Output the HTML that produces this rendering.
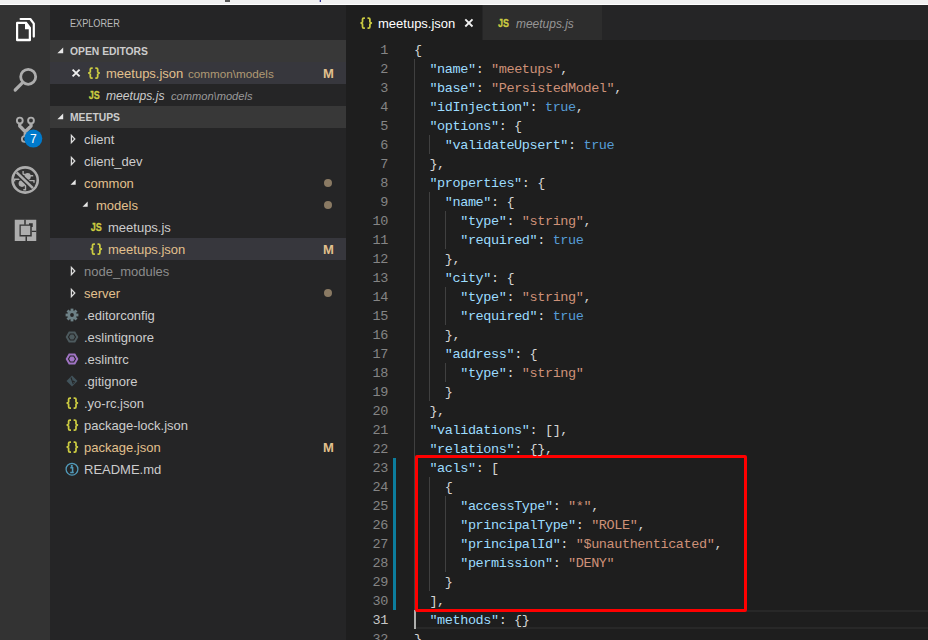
<!DOCTYPE html>
<html><head><meta charset="utf-8">
<style>
*{margin:0;padding:0;box-sizing:border-box}
html,body{width:928px;height:640px;overflow:hidden;background:#1e1e1e}
body{position:relative;font-family:"Liberation Sans",sans-serif}
.abs{position:absolute}
#top{left:0;top:0;width:928px;height:5px;background:#f0f0f0;border-bottom:1px solid #fff}
#act{left:0;top:5px;width:50px;height:635px;background:#333333}
#side{left:50px;top:5px;width:296px;height:635px;background:#252526}
#tabs{left:346px;top:5px;width:582px;height:35px;background:#252526}
#editor{left:346px;top:40px;width:582px;height:600px;background:#1e1e1e}
.row{position:absolute;left:0;width:296px;height:22px;font-size:13px;line-height:22px;color:#cccccc;white-space:nowrap}
.row>span.abs,.row>.badgeM{top:1px}
.hdr>span.abs{top:0}
.hdr{background:#383838;font-weight:bold;font-size:11px;color:#cccccc}
.sel{background:#37373d}
.mod{color:#e2c08d}
.ign{color:#8c8c8c}
.badgeM{position:absolute;left:273px;top:0;font-weight:bold;font-size:13px;color:#e2c08d}
.dot{position:absolute;left:274px;top:7px;width:8px;height:8px;border-radius:50%;background:#8a7a63}
.ln{position:absolute;left:0;top:1px;width:42px;text-align:right;color:#858585}
.ln.act{color:#c6c6c6}
.sx{display:inline-block;transform-origin:0 50%}
.code{position:absolute;top:1px;left:68px;white-space:pre;color:#d4d4d4}
.k{color:#9cdcfe}.s{color:#ce9178}.b{color:#569cd6}
.line{position:absolute;left:0;width:582px;height:19px;line-height:19px;font-family:"Liberation Mono",monospace;font-size:13.5px;letter-spacing:-0.4px}
.guide{position:absolute;width:1px;background:#404040}
</style></head><body>
<div id="top" class="abs"></div>
<div id="act" class="abs"></div>
<div id="side" class="abs">
  <div class="abs" style="left:20px;top:12px;font-size:11px;color:#bbbbbb"><span class="sx" style="transform:scaleX(0.83)">EXPLORER</span></div>
  <div class="row hdr" style="top:35px"><span class="abs sx" style="left:20px;transform:scaleX(0.94)">OPEN EDITORS</span></div>
  <div class="row sel mod" style="top:57px"><span class="abs" style="left:56px">meetups.json</span> <span class="abs" style="left:138px;font-size:11.7px;color:#b09a74">common\models</span><span class="badgeM">M</span></div>
  <div class="row" style="top:79px"><span class="abs sx" style="left:56px;font-style:italic;transform:scaleX(0.93)">meetups.js</span><span class="abs sx" style="left:120.5px;font-size:11.7px;font-style:italic;color:#9a9a9a;transform:scaleX(0.95)">common\models</span></div>
  <div class="row hdr" style="top:101px"><span class="abs sx" style="left:20px;transform:scaleX(0.94)">MEETUPS</span></div>
  <div class="row" style="top:123px"><span class="abs" style="left:34px">client</span></div>
  <div class="row" style="top:145px"><span class="abs" style="left:34px">client_dev</span></div>
  <div class="row mod" style="top:167px"><span class="abs" style="left:34px">common</span><span class="dot"></span></div>
  <div class="row mod" style="top:189px"><span class="abs" style="left:46px">models</span><span class="dot"></span></div>
  <div class="row" style="top:211px"><span class="abs" style="left:58px">meetups.js</span></div>
  <div class="row sel mod" style="top:233px"><span class="abs" style="left:58px">meetups.json</span><span class="badgeM">M</span></div>
  <div class="row ign" style="top:255px"><span class="abs" style="left:34px">node_modules</span></div>
  <div class="row mod" style="top:277px"><span class="abs" style="left:34px">server</span><span class="dot"></span></div>
  <div class="row" style="top:299px"><span class="abs" style="left:34px">.editorconfig</span></div>
  <div class="row" style="top:321px"><span class="abs" style="left:34px">.eslintignore</span></div>
  <div class="row" style="top:343px"><span class="abs" style="left:34px">.eslintrc</span></div>
  <div class="row" style="top:365px"><span class="abs" style="left:34px">.gitignore</span></div>
  <div class="row" style="top:387px"><span class="abs" style="left:34px">.yo-rc.json</span></div>
  <div class="row" style="top:409px"><span class="abs" style="left:34px">package-lock.json</span></div>
  <div class="row mod" style="top:431px"><span class="abs" style="left:34px">package.json</span><span class="badgeM">M</span></div>
  <div class="row" style="top:453px"><span class="abs" style="left:34px">README.md</span></div>
</div>
<div id="tabs" class="abs">
  <div class="abs" style="left:0;top:0;width:136px;height:35px;background:#1e1e1e"></div>
  <div class="abs" style="left:137px;top:0;width:119px;height:35px;background:#2d2d2d"></div>
  <div class="abs" style="left:32px;top:1px;line-height:35px;font-size:13px;color:#ffffff">meetups.json</div>
  <div class="abs" style="left:170px;top:1px;line-height:35px;font-size:13px;color:#969696;font-style:italic"><span class="sx" style="transform:scaleX(0.92)">meetups.js</span></div>
</div>
<div id="editor" class="abs">
<div class="guide" style="left:68px;top:19px;height:19px"></div>
<div class="guide" style="left:68px;top:38px;height:19px"></div>
<div class="guide" style="left:68px;top:57px;height:19px"></div>
<div class="guide" style="left:68px;top:76px;height:19px"></div>
<div class="guide" style="left:68px;top:95px;height:19px"></div>
<div class="guide" style="left:83px;top:95px;height:19px"></div>
<div class="guide" style="left:68px;top:114px;height:19px"></div>
<div class="guide" style="left:68px;top:133px;height:19px"></div>
<div class="guide" style="left:68px;top:152px;height:19px"></div>
<div class="guide" style="left:83px;top:152px;height:19px"></div>
<div class="guide" style="left:68px;top:171px;height:19px"></div>
<div class="guide" style="left:83px;top:171px;height:19px"></div>
<div class="guide" style="left:99px;top:171px;height:19px"></div>
<div class="guide" style="left:68px;top:190px;height:19px"></div>
<div class="guide" style="left:83px;top:190px;height:19px"></div>
<div class="guide" style="left:99px;top:190px;height:19px"></div>
<div class="guide" style="left:68px;top:209px;height:19px"></div>
<div class="guide" style="left:83px;top:209px;height:19px"></div>
<div class="guide" style="left:68px;top:228px;height:19px"></div>
<div class="guide" style="left:83px;top:228px;height:19px"></div>
<div class="guide" style="left:68px;top:247px;height:19px"></div>
<div class="guide" style="left:83px;top:247px;height:19px"></div>
<div class="guide" style="left:99px;top:247px;height:19px"></div>
<div class="guide" style="left:68px;top:266px;height:19px"></div>
<div class="guide" style="left:83px;top:266px;height:19px"></div>
<div class="guide" style="left:99px;top:266px;height:19px"></div>
<div class="guide" style="left:68px;top:285px;height:19px"></div>
<div class="guide" style="left:83px;top:285px;height:19px"></div>
<div class="guide" style="left:68px;top:304px;height:19px"></div>
<div class="guide" style="left:83px;top:304px;height:19px"></div>
<div class="guide" style="left:68px;top:323px;height:19px"></div>
<div class="guide" style="left:83px;top:323px;height:19px"></div>
<div class="guide" style="left:99px;top:323px;height:19px"></div>
<div class="guide" style="left:68px;top:342px;height:19px"></div>
<div class="guide" style="left:83px;top:342px;height:19px"></div>
<div class="guide" style="left:68px;top:361px;height:19px"></div>
<div class="guide" style="left:68px;top:380px;height:19px"></div>
<div class="guide" style="left:68px;top:399px;height:19px"></div>
<div class="guide" style="left:68px;top:418px;height:19px"></div>
<div class="guide" style="left:68px;top:437px;height:19px"></div>
<div class="guide" style="left:83px;top:437px;height:19px"></div>
<div class="guide" style="left:68px;top:456px;height:19px"></div>
<div class="guide" style="left:83px;top:456px;height:19px"></div>
<div class="guide" style="left:99px;top:456px;height:19px"></div>
<div class="guide" style="left:68px;top:475px;height:19px"></div>
<div class="guide" style="left:83px;top:475px;height:19px"></div>
<div class="guide" style="left:99px;top:475px;height:19px"></div>
<div class="guide" style="left:68px;top:494px;height:19px"></div>
<div class="guide" style="left:83px;top:494px;height:19px"></div>
<div class="guide" style="left:99px;top:494px;height:19px"></div>
<div class="guide" style="left:68px;top:513px;height:19px"></div>
<div class="guide" style="left:83px;top:513px;height:19px"></div>
<div class="guide" style="left:99px;top:513px;height:19px"></div>
<div class="guide" style="left:68px;top:532px;height:19px"></div>
<div class="guide" style="left:83px;top:532px;height:19px"></div>
<div class="guide" style="left:68px;top:551px;height:19px"></div>
<div class="guide" style="left:68px;top:570px;height:19px"></div>
<div class="abs" style="left:68px;top:570px;width:514px;height:19px;border-top:2px solid #282828;border-bottom:2px solid #282828"></div>
<div class="abs" style="left:68px;top:570px;width:2px;height:19px;background:#aeafad"></div>
<div class="abs" style="left:47px;top:418px;width:3px;height:152px;background:#0c7d9d"></div>
<div class="abs" style="left:69px;top:415px;width:332px;height:157px;border:3px solid #ff0000;border-radius:2px"></div>
<div class="line" style="top:0px"><span class="ln">1</span><span class="code">{</span></div>
<div class="line" style="top:19px"><span class="ln">2</span><span class="code">  <span class="k">&quot;name&quot;</span>: <span class="s">&quot;meetups&quot;</span>,</span></div>
<div class="line" style="top:38px"><span class="ln">3</span><span class="code">  <span class="k">&quot;base&quot;</span>: <span class="s">&quot;PersistedModel&quot;</span>,</span></div>
<div class="line" style="top:57px"><span class="ln">4</span><span class="code">  <span class="k">&quot;idInjection&quot;</span>: <span class="b">true</span>,</span></div>
<div class="line" style="top:76px"><span class="ln">5</span><span class="code">  <span class="k">&quot;options&quot;</span>: {</span></div>
<div class="line" style="top:95px"><span class="ln">6</span><span class="code">    <span class="k">&quot;validateUpsert&quot;</span>: <span class="b">true</span></span></div>
<div class="line" style="top:114px"><span class="ln">7</span><span class="code">  },</span></div>
<div class="line" style="top:133px"><span class="ln">8</span><span class="code">  <span class="k">&quot;properties&quot;</span>: {</span></div>
<div class="line" style="top:152px"><span class="ln">9</span><span class="code">    <span class="k">&quot;name&quot;</span>: {</span></div>
<div class="line" style="top:171px"><span class="ln">10</span><span class="code">      <span class="k">&quot;type&quot;</span>: <span class="s">&quot;string&quot;</span>,</span></div>
<div class="line" style="top:190px"><span class="ln">11</span><span class="code">      <span class="k">&quot;required&quot;</span>: <span class="b">true</span></span></div>
<div class="line" style="top:209px"><span class="ln">12</span><span class="code">    },</span></div>
<div class="line" style="top:228px"><span class="ln">13</span><span class="code">    <span class="k">&quot;city&quot;</span>: {</span></div>
<div class="line" style="top:247px"><span class="ln">14</span><span class="code">      <span class="k">&quot;type&quot;</span>: <span class="s">&quot;string&quot;</span>,</span></div>
<div class="line" style="top:266px"><span class="ln">15</span><span class="code">      <span class="k">&quot;required&quot;</span>: <span class="b">true</span></span></div>
<div class="line" style="top:285px"><span class="ln">16</span><span class="code">    },</span></div>
<div class="line" style="top:304px"><span class="ln">17</span><span class="code">    <span class="k">&quot;address&quot;</span>: {</span></div>
<div class="line" style="top:323px"><span class="ln">18</span><span class="code">      <span class="k">&quot;type&quot;</span>: <span class="s">&quot;string&quot;</span></span></div>
<div class="line" style="top:342px"><span class="ln">19</span><span class="code">    }</span></div>
<div class="line" style="top:361px"><span class="ln">20</span><span class="code">  },</span></div>
<div class="line" style="top:380px"><span class="ln">21</span><span class="code">  <span class="k">&quot;validations&quot;</span>: [],</span></div>
<div class="line" style="top:399px"><span class="ln">22</span><span class="code">  <span class="k">&quot;relations&quot;</span>: {},</span></div>
<div class="line" style="top:418px"><span class="ln">23</span><span class="code">  <span class="k">&quot;acls&quot;</span>: [</span></div>
<div class="line" style="top:437px"><span class="ln">24</span><span class="code">    {</span></div>
<div class="line" style="top:456px"><span class="ln">25</span><span class="code">      <span class="k">&quot;accessType&quot;</span>: <span class="s">&quot;*&quot;</span>,</span></div>
<div class="line" style="top:475px"><span class="ln">26</span><span class="code">      <span class="k">&quot;principalType&quot;</span>: <span class="s">&quot;ROLE&quot;</span>,</span></div>
<div class="line" style="top:494px"><span class="ln">27</span><span class="code">      <span class="k">&quot;principalId&quot;</span>: <span class="s">&quot;$unauthenticated&quot;</span>,</span></div>
<div class="line" style="top:513px"><span class="ln">28</span><span class="code">      <span class="k">&quot;permission&quot;</span>: <span class="s">&quot;DENY&quot;</span></span></div>
<div class="line" style="top:532px"><span class="ln">29</span><span class="code">    }</span></div>
<div class="line" style="top:551px"><span class="ln">30</span><span class="code">  ],</span></div>
<div class="line" style="top:570px"><span class="ln act">31</span><span class="code">  <span class="k">&quot;methods&quot;</span>: {}</span></div>
<div class="line" style="top:589px"><span class="ln">32</span><span class="code">}</span></div>

</div>
<svg class="abs" style="left:0;top:0" width="928" height="640" viewBox="0 0 928 640">
<!-- top strip glyph remnants -->
<path d="M225,1 H230" stroke="#000" stroke-width="1.3"/>
<path d="M320.3,0 V2" stroke="#1e1e8a" stroke-width="1.2"/>
<!-- activity bar: files -->
<path fill="#fff" fill-rule="evenodd" d="M17.2,21.7 H26.6 L31,27.4 V40 Q31,41.2 29.8,41.2 H17.2 Q16,41.2 16,40 V22.9 Q16,21.7 17.2,21.7 Z M18.2,24.1 V38.8 H28.75 V29.2 H25 V24.1 Z"/>
<path d="M20.6,19 H30.3 L33.8,23.6 V36.6" fill="none" stroke="#fff" stroke-width="2.2" stroke-linecap="round" stroke-linejoin="round"/>
<!-- search -->
<circle cx="28.2" cy="76.8" r="7.5" fill="none" stroke="#adadad" stroke-width="2.8"/>
<path d="M22.6,82.6 L15.2,90" stroke="#adadad" stroke-width="3.2" stroke-linecap="round"/>
<!-- git -->
<g fill="none" stroke="#adadad">
<circle cx="19.8" cy="120.5" r="2.9" stroke-width="1.9"/>
<circle cx="31" cy="120.5" r="2.9" stroke-width="1.9"/>
<circle cx="24.8" cy="139" r="2.9" stroke-width="1.9"/>
<path d="M19.8,123.2 V126 L25.3,131.8 V136 M31,123.2 V126 L25.3,131.8" stroke-width="3.4" stroke-linejoin="round"/>
</g>
<circle cx="33.3" cy="138.6" r="9" fill="#007acc"/>
<text x="33.3" y="142.8" font-family="Liberation Sans" font-size="12" fill="#fff" text-anchor="middle">7</text>
<!-- debug -->
<defs><clipPath id="dbgc"><circle cx="25.15" cy="180" r="11.3"/></clipPath></defs>
<circle cx="25.15" cy="180" r="12.6" fill="none" stroke="#adadad" stroke-width="2.6"/>
<g clip-path="url(#dbgc)">
<g fill="#adadad">
<ellipse cx="22" cy="183.6" rx="3.4" ry="3.3"/>
<ellipse cx="27.6" cy="176.4" rx="3.2" ry="3.4"/>
</g>
<g fill="none" stroke="#adadad" stroke-width="1.4">
<path d="M14.6,181.6 V179.3 H19.5 M25.5,184.5 V189.8 H23.3 M23.1,171 V174.5 H25 M29.2,180.6 H34 V182.8 M29.6,175.8 H33.2"/>
</g>
<path d="M12,168 L38,193" stroke="#333" stroke-width="5.4"/>
<path d="M12,168 L38,193" stroke="#adadad" stroke-width="2.5"/>
</g>
<!-- extensions -->
<rect x="14.75" y="219.75" width="21.5" height="21.25" fill="#adadad"/>
<g fill="#333">
<rect x="24.25" y="219.75" width="1.5" height="5"/>
<rect x="31.75" y="230.75" width="4.5" height="1.25"/>
<rect x="25.5" y="236.3" width="1.5" height="4.7"/>
<rect x="19.5" y="224.5" width="12.25" height="12"/>
<rect x="29" y="223.25" width="3.75" height="3.75"/>
</g>
<rect x="20.75" y="225.75" width="9.5" height="9.25" fill="#adadad"/>
</svg>

<!-- sideicons -->
<svg class="abs" style="left:0;top:0" width="928" height="640" viewBox="0 0 928 640">
<defs><symbol id="br" viewBox="0 0 12 12"><path d="M4.7,1 H3.6 Q2.3,1 2.3,2.3 V4.9 L0.8,6 L2.3,7.1 V9.7 Q2.3,11 3.6,11 H4.7 M7.3,1 H8.4 Q9.7,1 9.7,2.3 V4.9 L11.2,6 L9.7,7.1 V9.7 Q9.7,11 8.4,11 H7.3" fill="none" stroke="#cbcb41" stroke-width="1.75"/></symbol></defs>
<path d="M63.2,47.6 V53.2 H57.4 Z" fill="#e8e8e8"/>
<path d="M72.6,69.6 L79.6,76.4 M79.6,69.6 L72.6,76.4" stroke="#f0f0f0" stroke-width="1.9"/>
<use href="#br" x="88" y="67" width="12" height="12"/>
<text x="88.8" y="99.10000000000001" font-family="Liberation Sans" font-weight="bold" font-size="11.3" fill="#cbcb41" stroke="#cbcb41" stroke-width="0.3" textLength="11" lengthAdjust="spacingAndGlyphs">JS</text>
<path d="M63.2,113.6 V119.2 H57.4 Z" fill="#e8e8e8"/>
<path d="M71.4,135.4 L74.8,139 L71.4,142.6 Z" fill="none" stroke="#dcdcdc" stroke-width="1.3" stroke-linejoin="miter"/>
<path d="M71.4,157.4 L74.8,161 L71.4,164.6 Z" fill="none" stroke="#dcdcdc" stroke-width="1.3" stroke-linejoin="miter"/>
<path d="M71.4,267.4 L74.8,271 L71.4,274.6 Z" fill="none" stroke="#dcdcdc" stroke-width="1.3" stroke-linejoin="miter"/>
<path d="M71.4,289.4 L74.8,293 L71.4,296.6 Z" fill="none" stroke="#dcdcdc" stroke-width="1.3" stroke-linejoin="miter"/>
<path d="M75.7,179.6 V184.8 H70.5 Z" fill="#e8e8e8"/>
<path d="M87.7,201.6 V206.8 H82.5 Z" fill="#e8e8e8"/>
<text x="90.8" y="231.2" font-family="Liberation Sans" font-weight="bold" font-size="11.3" fill="#cbcb41" stroke="#cbcb41" stroke-width="0.3" textLength="11" lengthAdjust="spacingAndGlyphs">JS</text>
<use href="#br" x="90.2" y="243" width="12" height="12"/>
<g fill="#6d8086"><circle cx="72" cy="315" r="4.6"/><rect x="70.6" y="308.6" width="2.8" height="2.6" transform="rotate(0 72 315)"/><rect x="70.6" y="308.6" width="2.8" height="2.6" transform="rotate(45 72 315)"/><rect x="70.6" y="308.6" width="2.8" height="2.6" transform="rotate(90 72 315)"/><rect x="70.6" y="308.6" width="2.8" height="2.6" transform="rotate(135 72 315)"/><rect x="70.6" y="308.6" width="2.8" height="2.6" transform="rotate(180 72 315)"/><rect x="70.6" y="308.6" width="2.8" height="2.6" transform="rotate(225 72 315)"/><rect x="70.6" y="308.6" width="2.8" height="2.6" transform="rotate(270 72 315)"/><rect x="70.6" y="308.6" width="2.8" height="2.6" transform="rotate(315 72 315)"/></g><circle cx="72" cy="315" r="1.9" fill="#252526"/>
<polygon points="78.40,337.00 75.20,342.54 68.80,342.54 65.60,337.00 68.80,331.46 75.20,331.46" fill="#4d5a5e"/><polygon points="75.52,337.00 73.76,340.05 70.24,340.05 68.48,337.00 70.24,333.95 73.76,333.95" fill="none" stroke="#252526" stroke-width="1.1"/>
<polygon points="78.40,359.00 75.20,364.54 68.80,364.54 65.60,359.00 68.80,353.46 75.20,353.46" fill="#a074c4"/><polygon points="75.52,359.00 73.76,362.05 70.24,362.05 68.48,359.00 70.24,355.95 73.76,355.95" fill="none" stroke="#252526" stroke-width="1.1"/>
<path d="M72,375.4 L77.5,380.9 L72,386.4 L66.5,380.9 Z" fill="#41535b"/><path d="M71,377.5 L73.3,384 M73,381 L75,382.2" stroke="#252526" stroke-width="1.1"/>
<use href="#br" x="66.3" y="397" width="12" height="12"/>
<use href="#br" x="66.3" y="419" width="12" height="12"/>
<use href="#br" x="66.3" y="441" width="12" height="12"/>
<circle cx="72" cy="469.2" r="5.9" fill="none" stroke="#519aba" stroke-width="1.3"/><circle cx="71.8" cy="465.9" r="1.1" fill="#519aba"/><path d="M70.3,467.7 H72.6 V472.3 M70.2,472.5 H73.8" stroke="#519aba" stroke-width="1.5" fill="none"/>
<use href="#br" x="360.2" y="17" width="12" height="12"/>
<path d="M465.3,19.4 L472.5,26.5 M472.5,19.4 L465.3,26.5" stroke="#f0f0f0" stroke-width="1.9"/>
<text x="498" y="27.0" font-family="Liberation Sans" font-weight="bold" font-size="11.3" fill="#cbcb41" stroke="#cbcb41" stroke-width="0.3" textLength="11" lengthAdjust="spacingAndGlyphs">JS</text>
</svg>
</body></html>
